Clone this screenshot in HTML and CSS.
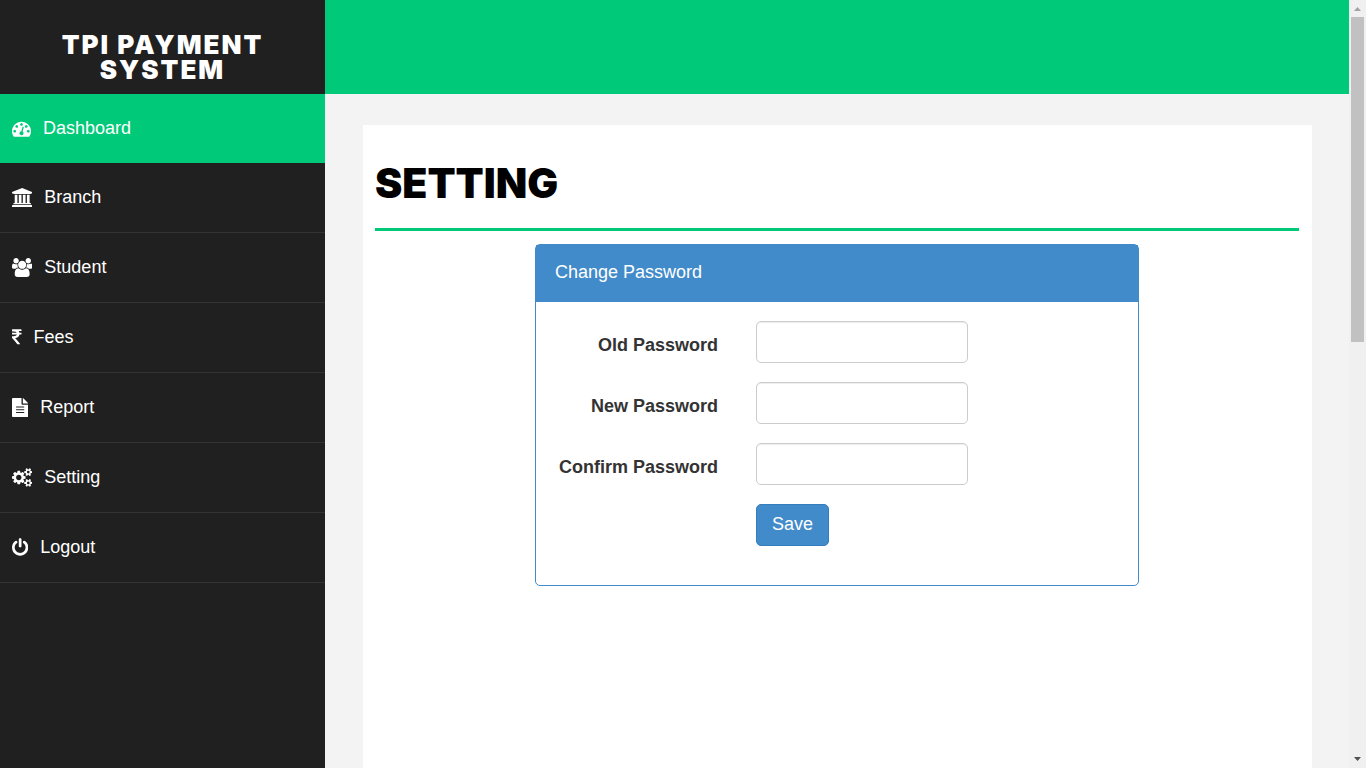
FILE: index.html
```html
<!DOCTYPE html>
<html lang="en">
  <head>
    <meta charset="UTF-8" />
    <meta name="viewport" content="width=device-width, initial-scale=1" />
    <title>TPI Payment System</title>
    <link rel="stylesheet" href="styles.css">
  </head>
  <body>
    <div class="wrapper">
      <!-- Sidebar -->
      <aside class="sidebar">
        <div class="brand">TPI PAYMENT SYSTEM</div>
        <nav class="main-menu">
          <a class="active-menu" href="#">
            <svg class="icon" viewBox="0 0 1792 1792"><path d="M384 1152q0-53-37.5-90.5t-90.5-37.5-90.5 37.5-37.5 90.5 37.5 90.5 90.5 37.5 90.5-37.5 37.5-90.5zm192-448q0-53-37.5-90.5t-90.5-37.5-90.5 37.5-37.5 90.5 37.5 90.5 90.5 37.5 90.5-37.5 37.5-90.5zm428 481l101-382q6-26-7.5-48.5t-38.5-29.5-48 6.5-30 39.5l-101 382q-60 5-107 43.5t-63 98.5q-20 77 20 146t117 89 146-20 89-117q16-60-6-117t-72-91zm660-33q0-53-37.5-90.5t-90.5-37.5-90.5 37.5-37.5 90.5 37.5 90.5 90.5 37.5 90.5-37.5 37.5-90.5zm-640-640q0-53-37.5-90.5t-90.5-37.5-90.5 37.5-37.5 90.5 37.5 90.5 90.5 37.5 90.5-37.5 37.5-90.5zm448 192q0-53-37.5-90.5t-90.5-37.5-90.5 37.5-37.5 90.5 37.5 90.5 90.5 37.5 90.5-37.5 37.5-90.5zm320 448q0 261-141 483-19 29-54 29h-1402q-35 0-54-29-141-221-141-483 0-182 71-348t191-286 286-191 348-71 348 71 286 191 191 286 71 348z"/></svg>
            Dashboard
          </a>
          <a href="#">
            <svg class="icon" viewBox="0 0 1920 1792"><path d="M960 0l960 384v128h-128q0 26-20.5 45t-48.5 19h-1526q-28 0-48.5-19t-20.5-45h-128v-128zm-704 640h256v768h128v-768h256v768h128v-768h256v768h128v-768h256v768h59q28 0 48.5 19t20.5 45v64h-1664v-64q0-26 20.5-45t48.5-19h59v-768zm1595 960q28 0 48.5 19t20.5 45v128h-1920v-128q0-26 20.5-45t48.5-19h1782z"/></svg>
            Branch
          </a>
          <a href="#">
            <svg class="icon" viewBox="0 0 1920 1792"><path d="M593 896q-162 5-265 128h-134q-82 0-138-40.5t-56-118.5q0-353 124-353 6 0 43.5 21t97.5 42.5 119 21.5q67 0 133-23-5 37-5 66 0 139 81 256zm1071 637q0 120-73 189.5t-194 69.5h-874q-121 0-194-69.5t-73-189.5q0-53 3.5-103.5t14-109 26.5-108.5 43-97.5 62-81 85.5-53.5 111.5-20q10 0 43 21.5t73 48 107 48 135 21.5 135-21.5 107-48 73-48 43-21.5q61 0 111.5 20t85.5 53.5 62 81 43 97.5 26.5 108.5 14 109 3.5 103.5zm-1024-1277q0 106-75 181t-181 75-181-75-75-181 75-181 181-75 181 75 75 181zm704 384q0 159-112.5 271.5t-271.5 112.5-271.5-112.5-112.5-271.5 112.5-271.5 271.5-112.5 271.5 112.5 112.5 271.5zm576 225q0 78-56 118.5t-138 40.5h-134q-103-123-265-128 81-117 81-256 0-29-5-66 66 23 133 23 59 0 119-21.5t97.5-42.5 43.5-21q124 0 124 353zm-128-609q0 106-75 181t-181 75-181-75-75-181 75-181 181-75 181 75 75 181z"/></svg>
            Student
          </a>
          <a href="#">
            <svg class="icon" viewBox="447 0 898 1792"><path d="M1345 470v102q0 14-9 23t-23 9h-168q-23 144-129 234t-276 110q167 178 459 536 14 16 4 34-8 18-29 18h-195q-16 0-25-12-306-367-498-571-9-9-9-22v-127q0-13 9.5-22.5t22.5-9.5h112q132 0 212.5-43t102.5-125h-427q-14 0-23-9t-9-23v-102q0-14 9-23t23-9h413q-57-113-268-113h-145q-13 0-22.5-9.5t-9.5-22.5v-133q0-14 9-23t23-9h832q14 0 23 9t9 23v102q0 14-9 23t-23 9h-233q47 61 64 144h171q14 0 23 9t9 23z"/></svg>
            Fees
          </a>
          <a href="#">
            <svg class="icon" viewBox="0 0 1536 1792"><path fill-rule="evenodd" d="M896 0v544q0 40 28 68t68 28h544v1056q0 40-28 68t-68 28h-1344q-40 0-68-28t-28-68v-1600q0-40 28-68t68-28zM384 800v96h768v-96zM384 1056v96h768v-96zM384 1312v96h768v-96zM1024 10q46 16 70 40l392 392q24 24 40 70h-502z"/></svg>
            Report
          </a>
          <a href="#">
            <svg class="icon" viewBox="0 0 1920 1792"><path d="M896 896q0-106-75-181t-181-75-181 75-75 181 75 181 181 75 181-75 75-181zm768 512q0-52-38-90t-90-38-90 38-38 90q0 53 37.5 90.5t90.5 37.5 90.5-37.5 37.5-90.5zm0-1024q0-52-38-90t-90-38-90 38-38 90q0 53 37.5 90.5t90.5 37.5 90.5-37.5 37.5-90.5zm-384 421v185q0 10-7 19.5t-16 10.5l-155 24q-11 35-32 76 34 48 90 115 7 11 7 20 0 12-7 19-23 30-82.5 89.5t-78.5 59.5q-11 0-21-7l-115-90q-37 19-77 31-11 108-23 155-7 24-30 24h-186q-11 0-20-7.5t-10-17.5l-23-153q-34-10-75-31l-118 89q-7 7-20 7-11 0-21-8-144-133-144-160 0-9 7-19 10-14 41-53t47-61q-23-44-35-82l-152-24q-10-1-17-9.5t-7-19.5v-185q0-10 7-19.5t16-10.5l155-24q11-35 32-76-34-48-90-115-7-11-7-20 0-12 7-20 22-30 82-89t79-59q11 0 21 7l115 90q34-18 77-32 11-108 23-154 7-24 30-24h186q11 0 20 7.5t10 17.5l23 153q34 10 75 31l118-89q8-7 20-7 11 0 21 8 144 133 144 160 0 8-7 19-12 16-42 54t-45 60q23 48 34 82l152 23q10 2 17 10.5t7 19.5zm640 533v140q0 16-149 31-12 27-30 52 51 113 51 138 0 4-4 7-122 71-124 71-8 0-46-47t-52-68q-20 2-30 2t-30-2q-14 21-52 68t-46 47q-2 0-124-71-4-3-4-7 0-25 51-138-18-25-30-52-149-15-149-31v-140q0-16 149-31 13-29 30-52-51-113-51-138 0-4 4-7 4-2 35-20t59-34 30-16q8 0 46 46.5t52 67.5q20-2 30-2t30 2q51-71 92-112l6-2q4 0 124 70 4 3 4 7 0 25-51 138 17 23 30 52 149 15 149 31zm0-1024v140q0 16-149 31-12 27-30 52 51 113 51 138 0 4-4 7-122 71-124 71-8 0-46-47t-52-68q-20 2-30 2t-30-2q-14 21-52 68t-46 47q-2 0-124-71-4-3-4-7 0-25 51-138-18-25-30-52-149-15-149-31v-140q0-16 149-31 13-29 30-52-51-113-51-138 0-4 4-7 4-2 35-20t59-34 30-16q8 0 46 46.5t52 67.5q20-2 30-2t30 2q51-71 92-112l6-2q4 0 124 70 4 3 4 7 0 25-51 138 17 23 30 52 149 15 149 31z"/></svg>
            Setting
          </a>
          <a href="#">
            <svg class="icon" viewBox="0 0 1536 1792"><path d="M1536 896q0 156-61 298t-164 245-245 164-298 61-298-61-245-164-164-245-61-298q0-182 80.5-343t226.5-270q43-32 95.5-25t83.5 50q32 42 24.5 94.5t-49.5 84.5q-98 74-151.5 181t-53.5 228q0 104 40.5 198.5t109.5 163.5 163.5 109.5 198.5 40.5 198.5-40.5 163.5-109.5 109.5-163.5 40.5-198.5q0-121-53.5-228t-151.5-181q-42-32-49.5-84.5t24.5-94.5q31-43 84-50t95 25q146 109 226.5 270t80.5 343zm-640-768v640q0 52-38 90t-90 38-90-38-38-90v-640q0-52 38-90t90-38 90 38 38 90z"/></svg>
            Logout
          </a>
        </nav>
      </aside>

      <!-- Page content -->
      <div class="page">
        <header class="navbar"></header>
        <main class="page-wrapper">
          <div class="page-inner">
            <h1 class="page-head-line">SETTING</h1>

            <section class="panel">
              <div class="panel-heading">Change Password</div>
              <form class="panel-body">
                <label for="old">Old Password</label>
                <input class="form-control" type="password" id="old" name="old">
                <label for="new">New Password</label>
                <input class="form-control" type="password" id="new" name="new">
                <label for="confirm">Confirm Password</label>
                <input class="form-control" type="password" id="confirm" name="confirm">
                <button class="btn" type="button">Save</button>
              </form>
            </section>
          </div>
        </main>
      </div>

      <!-- Scroll track -->
      <div class="scrollbar">
        <svg class="arrow arrow-up" viewBox="0 0 17 17"><path d="M5 11l3.5-4 3.5 4z"/></svg>
        <div class="thumb"></div>
        <svg class="arrow arrow-down" viewBox="0 0 17 17"><path d="M5 6l3.5 4 3.5-4z"/></svg>
      </div>
    </div>
  </body>
</html>
```
FILE: styles.css
```css
* {
  box-sizing: border-box;
}

body {
  margin: 0;
  font-family: "Liberation Sans", Arial, sans-serif;
  font-size: 18px;
  line-height: 25px;
  color: #333;
  background: #f3f3f3;
}

.wrapper {
  display: grid;
  grid-template-columns: 325px 1fr 17px;
  height: 100vh;
  overflow: hidden;
}

/* Sidebar */
.sidebar {
  background: #202020;
}

.brand {
  height: 94px;
  padding: 32px 50px 0;
  color: #fff;
  font-family: "Arial Black", Inter, sans-serif;
  font-size: 26px;
  font-weight: 900;
  letter-spacing: 2px;
  text-align: center;
}

.main-menu a {
  display: flex;
  align-items: center;
  gap: 12px;
  padding: 22px 12px;
  border-bottom: 1px solid #333;
  color: #fff;
  text-decoration: none;
}

.main-menu .active-menu {
  background: #00ca79;
  border-bottom: none;
}

.icon {
  height: 19px;
  margin-bottom: 1px;
  fill: #fff;
}

/* Content */
.page {
  display: flex;
  flex-direction: column;
  min-width: 0;
}

.navbar {
  height: 94px;
  background: #00ca79;
}

.page-wrapper {
  display: flex;
  flex: 1;
  padding: 31px 37px 0 38px;
}

.page-inner {
  flex: 1;
  padding: 12px 13px 12px 12px;
  background: #fff;
}

.page-head-line {
  margin: 0 0 13px;
  padding: 23px 0 21px;
  border-bottom: 3px solid #00ca79;
  color: #000;
  font-family: "Arial Black", Inter, sans-serif;
  font-size: 41px;
  font-weight: 900;
  line-height: 47px;
}

/* Change password panel */
.panel {
  width: 604px;
  max-width: 100%;
  margin: 0 auto;
  border: 1px solid #428bca;
  border-radius: 5px;
}

.panel-heading {
  padding: 15px 19px 17px;
  background: #428bca;
  color: #fff;
}

.panel-body {
  display: grid;
  grid-template-columns: 163px 212px;
  column-gap: 38px;
  row-gap: 19px;
  align-items: start;
  padding: 19px 19px 39px;
}

.panel-body label {
  padding-top: 12px;
  font-weight: bold;
  text-align: right;
}

.form-control {
  width: 100%;
  height: 42px;
  padding: 7px 15px;
  border: 1px solid #ccc;
  border-radius: 5px;
  box-shadow: inset 0 1px 1px rgba(0, 0, 0, 0.075);
  font: inherit;
}

.btn {
  grid-column: 2;
  justify-self: start;
  height: 42px;
  padding: 0 15px 2px;
  border: 1px solid #357ebd;
  border-radius: 5px;
  background: #428bca;
  color: #fff;
  font: inherit;
  cursor: pointer;
}

/* Scrollbar */
.scrollbar {
  display: flex;
  flex-direction: column;
  background: #f0f0f0;
}

.arrow {
  height: 17px;
}

.arrow-up {
  fill: #a3a3a3;
}

.arrow-down {
  margin-top: auto;
  fill: #505050;
}

.thumb {
  height: 325px;
  margin: 0 2px;
  background: #c1c1c1;
}
```
